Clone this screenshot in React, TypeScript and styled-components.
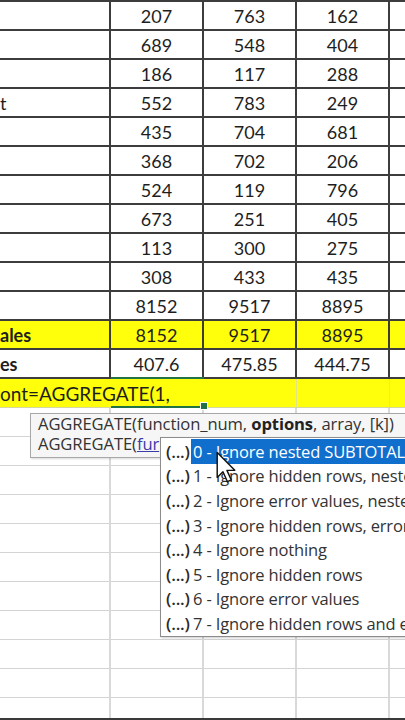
import React from 'react';
import styled, { createGlobalStyle, css } from 'styled-components';

const GlobalStyle = createGlobalStyle`
  html, body {
    margin: 0;
    padding: 0;
    background: #ffffff;
    overflow: hidden;
  }
`;

type Row = { label: string; values: (string | number)[]; yellow?: boolean; bold?: boolean };

const dataRows: Row[] = [
  { label: '', values: [207, 763, 162] },
  { label: '', values: [689, 548, 404] },
  { label: '', values: [186, 117, 288] },
  { label: 't', values: [552, 783, 249] },
  { label: '', values: [435, 704, 681] },
  { label: '', values: [368, 702, 206] },
  { label: '', values: [524, 119, 796] },
  { label: '', values: [673, 251, 405] },
  { label: '', values: [113, 300, 275] },
  { label: '', values: [308, 433, 435] },
  { label: '', values: [8152, 9517, 8895] },
  { label: 'ales', values: [8152, 9517, 8895], yellow: true, bold: true },
  { label: 'es', values: ['407.6', '475.85', '444.75'], bold: true },
];

const options = [
  '0 - Ignore nested SUBTOTAL and AGGREGATE functions',
  '1 - Ignore hidden rows, nested SUBTOTAL and AGGREGATE functions',
  '2 - Ignore error values, nested SUBTOTAL and AGGREGATE functions',
  '3 - Ignore hidden rows, error values, nested SUBTOTAL and AGGREGATE functions',
  '4 - Ignore nothing',
  '5 - Ignore hidden rows',
  '6 - Ignore error values',
  '7 - Ignore hidden rows and error values',
];

const App: React.FC = () => {
  return (
    <>
      <GlobalStyle />
      <Screen>
        <Sheet>
          {dataRows.map((row, i) => (
            <DataRow key={i} $yellow={row.yellow}>
              <LabelCell $bold={row.bold}>{row.label}</LabelCell>
              {row.values.map((v, j) => (
                <NumCell key={j}>{v}</NumCell>
              ))}
              <NumCell />
            </DataRow>
          ))}

          <FormulaRow>
            <FormulaText>ont=AGGREGATE(1,</FormulaText>
            <ActiveCell>
              <FillHandle />
            </ActiveCell>
            <FaintCell />
            <FaintCell />
            <FaintCell />
          </FormulaRow>

          {Array.from({ length: 11 }).map((_, i) => (
            <EmptyRow key={i}>
              <EmptyCell />
              <EmptyCell />
              <EmptyCell />
              <EmptyCell />
              <EmptyCell />
            </EmptyRow>
          ))}
        </Sheet>
        <BottomEdge />

        <Tooltip>
          <TipLine>
            AGGREGATE(function_num, <b>options</b>, array, [k])
          </TipLine>
          <TipLine>
            AGGREGATE(<TipLink>fur</TipLink>nction_num, array, options, [k])
          </TipLine>
        </Tooltip>

        <Dropdown>
          {options.map((opt, i) => (
            <Option key={i}>
              <OptionIcon>(...)</OptionIcon>
              <OptionLabel $active={i === 0}>{opt}</OptionLabel>
            </Option>
          ))}
        </Dropdown>

        <Cursor width="22" height="32" viewBox="0 0 13 20">
          <path
            d="M1 1 V16.5 L4.6 13 L7.4 19.2 L9.8 18.1 L7.1 12.1 H12 Z"
            fill="#ffffff"
            stroke="#111111"
            strokeWidth="0.9"
            strokeLinejoin="round"
          />
        </Cursor>
      </Screen>
    </>
  );
};

const Screen = styled.div`
  position: relative;
  width: 405px;
  height: 720px;
  overflow: hidden;
  background: #ffffff;
  font-family: 'Lato', 'Liberation Sans', sans-serif;
  color: #1e1e1e;
`;

const Sheet = styled.div`
  display: flex;
  flex-direction: column;
  border-top: 2px solid #3d3d3d;
`;

const rowGrid = css`
  display: grid;
  grid-template-columns: 111px 93px 93px 93px 1fr;
  height: 29px;
`;

const DataRow = styled.div<{ $yellow?: boolean }>`
  ${rowGrid};
  background: ${(p) => (p.$yellow ? '#ffff0c' : '#ffffff')};
`;

const cellBase = css`
  box-sizing: border-box;
  border-bottom: 2px solid #3d3d3d;
  border-right: 2px solid #3d3d3d;
  display: flex;
  align-items: center;
  font-size: 18px;
  white-space: nowrap;
  overflow: hidden;
`;

const LabelCell = styled.div<{ $bold?: boolean }>`
  ${cellBase};
  padding-left: 0;
  font-weight: ${(p) => (p.$bold ? 700 : 400)};
`;

const NumCell = styled.div`
  ${cellBase};
  justify-content: center;
  &:last-child {
    border-right: none;
  }
`;

const FormulaRow = styled.div`
  ${rowGrid};
  background: #ffff0c;
  border-bottom: 1px solid #d6d6a0;
  box-sizing: border-box;
`;

const FormulaText = styled.div`
  position: relative;
  z-index: 2;
  display: flex;
  align-items: center;
  font-size: 19px;
  white-space: nowrap;
  overflow: visible;
  width: 111px;
`;

const ActiveCell = styled.div`
  position: relative;
  box-sizing: border-box;
  margin-top: -2px;
  border-top: 2px solid #217346;
  border-bottom: 2px solid #217346;
  margin-bottom: -1px;
`;

const FillHandle = styled.span`
  position: absolute;
  right: -4px;
  bottom: -4px;
  width: 6px;
  height: 6px;
  background: #217346;
  border: 1px solid #ffffff;
`;

const FaintCell = styled.div`
  border-right: 1px solid #e2e28a;
  &:last-child {
    border-right: none;
  }
`;

const EmptyRow = styled.div`
  ${rowGrid};
`;

const EmptyCell = styled.div`
  box-sizing: border-box;
  border-bottom: 1px solid #d4d4d4;
  border-right: 2px solid #d9d9d9;
  &:last-child {
    border-right: none;
  }
`;

const BottomEdge = styled.div`
  position: absolute;
  left: 0;
  right: 0;
  bottom: 0;
  height: 2px;
  background: #3a3a3a;
`;

const Tooltip = styled.div`
  position: absolute;
  left: 30px;
  top: 413px;
  width: 420px;
  height: 45px;
  box-sizing: border-box;
  padding: 0 0 0 7px;
  background: #f6f6f6;
  border: 1px solid #a8a8a8;
  font-family: 'Open Sans', 'Noto Sans', sans-serif;
  font-size: 16.6px;
  color: #333333;
  letter-spacing: -0.1px;
  box-shadow: 1px 1px 2px rgba(0, 0, 0, 0.15);
`;

const TipLine = styled.div`
  height: 20px;
  line-height: 20px;
  white-space: nowrap;
  b {
    font-weight: 700;
    color: #222222;
  }
`;

const TipLink = styled.span`
  color: #3a3aa8;
  text-decoration: underline;
`;

const Dropdown = styled.div`
  position: absolute;
  left: 160px;
  top: 437px;
  width: 300px;
  height: 200px;
  box-sizing: border-box;
  padding-top: 1px;
  background: #ffffff;
  border: 1px solid #8c8c8c;
  font-family: 'Open Sans', 'Noto Sans', sans-serif;
  font-size: 16.5px;
  color: #333333;
  box-shadow: 1px 1px 2px rgba(0, 0, 0, 0.2);
`;

const Option = styled.div`
  display: flex;
  align-items: stretch;
  height: 24.6px;
  white-space: nowrap;
`;

const OptionIcon = styled.span`
  width: 30px;
  flex-shrink: 0;
  display: flex;
  align-items: center;
  padding-left: 5px;
  box-sizing: border-box;
  font-weight: 600;
  font-size: 17px;
  letter-spacing: -0.2px;
  color: #2a2a2a;
`;

const OptionLabel = styled.span<{ $active?: boolean }>`
  display: flex;
  align-items: center;
  flex: 1;
  padding-left: 2px;
  letter-spacing: -0.15px;
  background: ${(p) => (p.$active ? '#106ecd' : 'transparent')};
  color: ${(p) => (p.$active ? '#ffffff' : '#333333')};
`;

const Cursor = styled.svg`
  position: absolute;
  left: 215px;
  top: 451px;
  z-index: 5;
`;

export default App;
